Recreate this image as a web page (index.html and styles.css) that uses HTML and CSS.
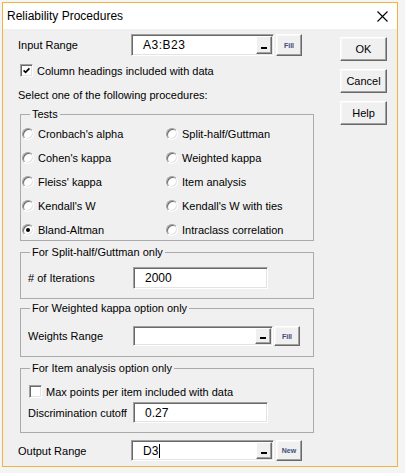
FILE: index.html
```html
<!DOCTYPE html>
<html>
<head>
<meta charset="utf-8">
<title>Reliability Procedures</title>
<link rel="stylesheet" href="styles.css">
</head>
<body>
<div class="window">
  <div class="titlebar">
    <span class="title">Reliability Procedures</span>
    <svg class="close" width="11" height="11" viewBox="0 0 11 11"><path d="M0.5 0.5 L10.5 10.5 M10.5 0.5 L0.5 10.5" stroke="#000" stroke-width="1.1" fill="none"/></svg>
  </div>
  <div class="content">
    <div class="main">
      <div class="row range-row">
        <span class="label-wide">Input Range</span>
        <div class="input ref-input h22"><span class="val spaced">A3:B23</span><span class="minbtn"><i></i></span></div>
        <span class="btn small h22">Fill</span>
      </div>
      <div class="check-row top-check">
        <span class="checkbox"><svg width="7" height="7" viewBox="0 0 7 7"><path d="M0.6 3.4 L2.6 5.4 L6.4 1.4" stroke="#000" stroke-width="1.7" fill="none"/></svg></span>
        <span>Column headings included with data</span>
      </div>
      <div class="select-text">Select one of the following procedures:</div>

      <div class="group tests">
        <div class="group-title">Tests</div>
        <div class="radio-grid">
          <label class="opt"><span class="radio"></span>Cronbach's alpha</label>
          <label class="opt"><span class="radio"></span>Split-half/Guttman</label>
          <label class="opt"><span class="radio"></span>Cohen's kappa</label>
          <label class="opt"><span class="radio"></span>Weighted kappa</label>
          <label class="opt"><span class="radio"></span>Fleiss' kappa</label>
          <label class="opt"><span class="radio"></span>Item analysis</label>
          <label class="opt"><span class="radio"></span>Kendall's W</label>
          <label class="opt"><span class="radio"></span>Kendall's W with ties</label>
          <label class="opt"><span class="radio on"></span>Bland-Altman</label>
          <label class="opt"><span class="radio"></span>Intraclass correlation</label>
        </div>
      </div>

      <div class="group split">
        <div class="group-title">For Split-half/Guttman only</div>
        <div class="group-body split-body">
          <div class="row">
            <span class="label">#&nbsp;of Iterations</span>
            <div class="input plain-input h22"><span class="val">2000</span></div>
          </div>
        </div>
      </div>

      <div class="group weighted">
        <div class="group-title">For Weighted kappa option only</div>
        <div class="group-body weighted-body">
          <div class="row">
            <span class="label">Weights Range</span>
            <div class="input weights-input h20"><span class="val"></span><span class="minbtn"><i></i></span></div>
            <span class="btn small tight h20">Fill</span>
          </div>
        </div>
      </div>

      <div class="group item">
        <div class="group-title">For Item analysis option only</div>
        <div class="group-body item-body">
          <div class="check-row item-check">
            <span class="checkbox"></span>
            <span>Max points per item included with data</span>
          </div>
          <div class="row disc-row">
            <span class="label">Discrimination cutoff</span>
            <div class="input plain-input h21"><span class="val">0.27</span></div>
          </div>
        </div>
      </div>

      <div class="row output-row">
        <span class="label-wide">Output Range</span>
        <div class="input ref-input h21"><span class="val">D3<span class="caret"></span></span><span class="minbtn"><i></i></span></div>
        <span class="btn small h21">New</span>
      </div>
    </div>
    <div class="side">
      <span class="btn big">OK</span>
      <span class="btn big">Cancel</span>
      <span class="btn big">Help</span>
    </div>
  </div>
</div>
</body>
</html>
```
FILE: styles.css
```css
* { box-sizing: border-box; }
body {
  margin: 0;
  background: #f4f4f4;
  font-family: "Liberation Sans", Arial, sans-serif;
  font-size: 11px;
  color: #000;
}
.window {
  margin: 2px 0 0 2px;
  width: 396px;
  height: 465px;
  border: 1px solid #f2b33d;
  background: #f0f0f0;
}
.titlebar {
  height: 26px;
  background: #fff;
  display: flex;
  align-items: center;
  justify-content: space-between;
  padding: 0 9px 0 4px;
}
.title { font-size: 12px; }
.close { display: block; }

.content {
  display: grid;
  grid-template-columns: 322px 47px;
  padding-left: 15px;
}
.main { padding-top: 5px; }
.side {
  padding-top: 8px;
  display: flex;
  flex-direction: column;
  gap: 8px;
}

.row { display: flex; align-items: center; }
.label-wide { width: 113px; flex: none; }
.label { width: 105px; flex: none; }

.h22 { height: 22px; }
.h21 { height: 21px; }
.h20 { height: 20px; }

.input {
  display: flex;
  align-items: stretch;
  background: #fff;
  border: 1px solid;
  border-color: #a0a0a0 #fff #fff #a0a0a0;
  box-shadow: inset 1px 1px 0 #696969, inset -1px -1px 0 #e3e3e3;
  padding: 1px;
  flex: none;
}
.ref-input { width: 143px; }
.plain-input { width: 135px; }
.weights-input { width: 140px; }
.val {
  flex: 1;
  display: flex;
  align-items: center;
  padding-left: 10px;
  font-size: 12px;
}
.spaced { letter-spacing: 0.5px; }
.caret {
  display: inline-block;
  width: 1px;
  height: 14px;
  background: #000;
  margin-left: 1px;
}
.minbtn {
  width: 16px;
  flex: none;
  background: #f0f0f0;
  border: 1px solid;
  border-color: #fff #696969 #696969 #fff;
  box-shadow: inset -1px -1px 0 #a0a0a0;
  display: flex;
  justify-content: center;
  align-items: flex-end;
  padding-bottom: 4px;
}
.minbtn i {
  display: block;
  width: 6px;
  height: 2px;
  background: #000;
}

.btn {
  display: flex;
  align-items: center;
  justify-content: center;
  background: #f0f0f0;
  border: 1px solid;
  border-color: #fff #696969 #696969 #fff;
  box-shadow: inset -1px -1px 0 #a0a0a0, inset 1px 1px 0 #f8f8f8;
  flex: none;
}
.btn.big { width: 47px; height: 24px; font-size: 11px; }
.btn.small {
  width: 26px;
  margin-left: 2px;
  font-size: 7px;
  font-weight: bold;
  color: #3b4d78;
}
.btn.small.tight { margin-left: 1px; }

.check-row { display: flex; align-items: center; gap: 4px; height: 13px; }
.top-check { margin-top: 8px; padding-left: 2px; }
.checkbox {
  width: 13px;
  height: 13px;
  flex: none;
  background: #fff;
  border: 1px solid;
  border-color: #a0a0a0 #fff #fff #a0a0a0;
  box-shadow: inset 1px 1px 0 #696969, inset -1px -1px 0 #e3e3e3;
  display: flex;
  align-items: center;
  justify-content: center;
}
.checkbox svg { display: block; }

.select-text { margin-top: 11px; line-height: 14px; height: 14px; }

.group {
  margin-left: 2px;
  width: 294px;
  border: 1px solid #ababab;
}
.group-title {
  margin: -8px 0 0 9px;
  padding: 0 2px;
  background: #f0f0f0;
  width: max-content;
  height: 14px;
  line-height: 14px;
}
.tests { margin-top: 12px; }
.split { margin-top: 11px; }
.weighted { margin-top: 9px; }
.item { margin-top: 11px; }
.split-body { padding: 8px 0 9px 7px; }
.weighted-body { padding: 11px 0 10px 7px; }
.item-body { padding: 10px 0 9px 7px; }
.item-check { padding-left: 1px; }
.disc-row { margin-top: 4px; }

.radio-grid {
  display: grid;
  grid-template-columns: 144px 1fr;
  grid-auto-rows: 20px;
  row-gap: 4px;
  padding: 3px 0 0 1px;
}
.opt { display: flex; align-items: center; gap: 4px; }
.radio {
  width: 12px;
  height: 12px;
  flex: none;
  border-radius: 50%;
  background: #fff;
  border: 1px solid;
  border-color: #a0a0a0 #fff #fff #a0a0a0;
  box-shadow: inset 1px 1px 0 #696969, inset -1px -1px 0 #e3e3e3;
  display: flex;
  align-items: center;
  justify-content: center;
}
.radio.on::after {
  content: "";
  width: 4px;
  height: 4px;
  border-radius: 50%;
  background: #000;
}

.output-row { margin-top: 7px; }
```
